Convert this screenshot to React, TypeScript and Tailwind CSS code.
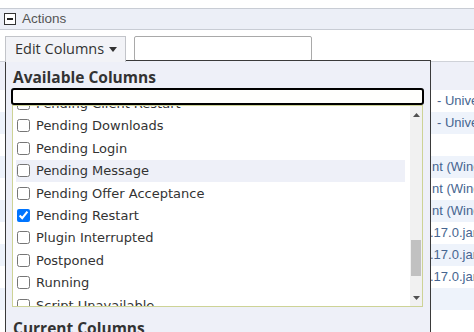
import React from 'react';

type Item = { label: string; checked?: boolean; hover?: boolean };

const items: Item[] = [
  { label: 'Pending Client Restart' },
  { label: 'Pending Downloads' },
  { label: 'Pending Login' },
  { label: 'Pending Message', hover: true },
  { label: 'Pending Offer Acceptance' },
  { label: 'Pending Restart', checked: true },
  { label: 'Plugin Interrupted' },
  { label: 'Postponed' },
  { label: 'Running' },
  { label: 'Script Unavailable' },
];

// rows of the grid behind the dropdown; only the right edge shows
const rows = [
  { text: '- Universal', pad: 'pl-[437px]' },
  { text: '- Universal', pad: 'pl-[437px]' },
  { text: '', pad: '' },
  { text: 'nt (Windows)', pad: 'pl-[432px]' },
  { text: 'nt (Windows)', pad: 'pl-[432px]' },
  { text: 'nt (Windows)', pad: 'pl-[432px]' },
  { text: '.17.0.jar', pad: 'pl-[430px]' },
  { text: '.17.0.jar', pad: 'pl-[430px]' },
  { text: '.17.0.jar', pad: 'pl-[430px]' },
  { text: '', pad: '' },
  { text: '', pad: '' },
];

const ColumnRow: React.FC<{ item: Item }> = ({ item }) => (
  <div
    className={`flex items-center h-[22.4px] ml-[3px] mr-[5px] ${item.hover ? 'bg-[#eef0f8]' : ''}`}
  >
    <input
      type="checkbox"
      readOnly
      checked={!!item.checked}
      className="ml-[1px] w-[13px] h-[13px]"
    />
    <span className="ml-[6px] text-[13px] text-[#333] whitespace-nowrap leading-none">
      {item.label}
    </span>
  </div>
);

export default function App() {
  return (
    <div className="relative w-[474px] h-[332px] overflow-hidden bg-white font-['Liberation_Sans',Arial,sans-serif]">
      <div className="h-[8px]" />

      {/* Actions bar */}
      <div className="h-[22px] flex items-center pl-[4px] border-y border-[#c8ccd4] bg-[#eceff7]">
        <div className="w-[12px] h-[12px] border border-[#333] flex items-center justify-center bg-white">
          <div className="w-[6px] h-[2px] bg-[#222]" />
        </div>
        <span className="ml-[6px] text-[13.5px] text-[#555] leading-none">Actions</span>
      </div>

      {/* toolbar */}
      <div className="mt-[6px] h-[25px] flex items-start">
        <button className="relative z-20 ml-[5px] w-[121px] h-[26px] border border-b-0 border-[#c2c4c9] bg-[#f2f3f7] flex items-center pl-[9px] pb-[1px] text-[14.5px] text-[#333] font-['Open_Sans',sans-serif]">
          Edit Columns
          <svg width="8" height="5" viewBox="0 0 8 5" className="ml-[5px] mt-[1px]">
            <polygon points="0,0 8,0 4,5" fill="#333" />
          </svg>
        </button>
        <input
          type="text"
          className="ml-[8px] w-[178px] h-[25px] border border-[#a9a9a9] rounded-[2px] bg-white outline-none"
        />
      </div>

      {/* grid behind */}
      <div className="border-t border-[#cfd2d8]">
        <div className="h-[28px] bg-[#eef0f8]" />
        {rows.map((r, i) => (
          <div
            key={i}
            className={`h-[22px] flex items-center text-[13px] text-[#466590] whitespace-nowrap ${r.pad} ${i % 2 === 1 ? 'bg-[#eef3fb]' : 'bg-white'}`}
          >
            {r.text}
          </div>
        ))}
      </div>

      {/* dropdown panel */}
      <div className="absolute z-10 left-[5px] top-[60px] w-[426px] h-[290px] border-x border-t border-[#3a3a3a] bg-[#eef0f8] font-['DejaVu_Sans',Verdana,sans-serif]">
        <div className="pt-[6px] pl-[7px] text-[15.5px] leading-[20px] font-bold text-[#333] font-['Open_Sans',sans-serif]">
          Available Columns
        </div>
        <div className="mt-[1px] ml-[5px] w-[413px] h-[17px] border-2 border-black rounded-[3px] bg-[#fffffd]" />

        <div className="ml-[6px] w-[411px] h-[202px] border border-[#cdd396] bg-white flex overflow-hidden">
          <div className="flex-1 overflow-hidden">
            <div className="-mt-[13.6px]">
              {items.map((it) => (
                <ColumnRow key={it.label} item={it} />
              ))}
            </div>
          </div>
          <div className="w-[12px] flex flex-col bg-[#f1f1f1]">
            <div className="h-[17px] flex items-center justify-center">
              <svg width="7" height="4" viewBox="0 0 7 4">
                <polygon points="0,4 7,4 3.5,0" fill="#505050" />
              </svg>
            </div>
            <div className="h-[117px]" />
            <div className="h-[36px] mx-[1px] bg-[#c1c1c1]" />
            <div className="flex-1" />
            <div className="h-[17px] flex items-center justify-center">
              <svg width="7" height="4" viewBox="0 0 7 4">
                <polygon points="0,0 7,0 3.5,4" fill="#505050" />
              </svg>
            </div>
          </div>
        </div>

        <div className="mt-[11px] pl-[7px] text-[15.5px] leading-[20px] font-bold text-[#333] font-['Open_Sans',sans-serif]">
          Current Columns
        </div>
      </div>
    </div>
  );
}
